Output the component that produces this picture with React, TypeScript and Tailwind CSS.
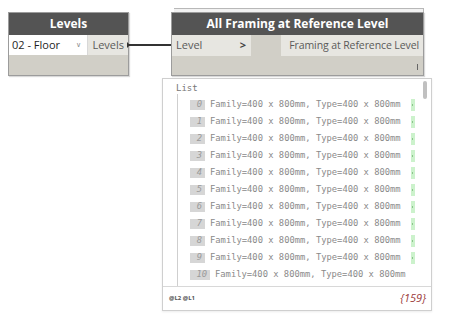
import React from 'react';

const rowText = 'Family=400 x 800mm, Type=400 x 800mm';

function Port({ children, align = 'left' }: { children: React.ReactNode; align?: 'left' | 'right' }) {
    return (
        <div className={`h-full bg-[#e7e6e1] flex items-center px-[4px] text-[11px] text-[#5a5a5a] whitespace-nowrap ${align === 'right' ? 'justify-end' : ''}`}>
            {children}
        </div>
    );
}

export default function App() {
    const rows = Array.from({ length: 12 }, (_, i) => i);

    return (
        <div className="relative w-[474px] h-[320px] bg-white overflow-hidden" style={{ fontFamily: '"Open Sans", "Noto Sans", sans-serif' }}>
            {/* Levels node */}
            <div className="absolute left-[8px] top-[12px] w-[121px] border border-[#9c9c9c] shadow-[1px_1px_1px_rgba(0,0,0,0.15)]">
                <div className="h-[22px] bg-[#545454] flex items-center justify-center text-white text-[12px] font-bold">Levels</div>
                <div className="h-[20px] flex">
                    <div className="w-[80px] bg-white flex items-center justify-between pl-[3px] pr-[6px] border-r border-[#d8d8d8]">
                        <span className="text-[11px] text-[#1e1e1e] font-medium">02 - Floor</span>
                        <span className="text-[7px] text-[#888]">&#8744;</span>
                    </div>
                    <div className="flex-1">
                        <Port>Levels</Port>
                    </div>
                </div>
                <div className="h-[20px] bg-[#d1cfc7]" />
            </div>

            {/* wire */}
            <svg className="absolute left-[126px] top-[39px]" width="48" height="12" viewBox="0 0 48 12">
                <line x1="3" y1="6" x2="45" y2="6" stroke="#333" strokeWidth="2" />
                <path d="M1 3 L4 6 L1 9 Z" fill="#333" />
                <path d="M47 3 L44 6 L47 9 Z" fill="#333" />
            </svg>

            {/* Main node, stacked look */}
            <div className="absolute left-[174px] top-[8px] w-[250px] h-[6px] border-t border-r border-[#b8b8b8] bg-[#f2f2f2]" />
            <div className="absolute left-[171px] top-[12px] w-[253px] border border-[#9c9c9c] shadow-[1px_1px_1px_rgba(0,0,0,0.15)]">
                <div className="h-[22px] bg-[#545454] flex items-center justify-center text-white text-[12px] font-bold">
                    All Framing at Reference Level
                </div>
                <div className="h-[21px] flex bg-[#d1cfc7]">
                    <div className="w-[79px]">
                        <Port>
                            <span className="flex-1">Level</span>
                            <span className="font-bold text-[#444] text-[11px] pr-[1px]">&gt;</span>
                        </Port>
                    </div>
                    <div className="flex-1" />
                    <div className="w-[142px]">
                        <Port align="right">
                            <span className="text-[10.5px] tracking-[-0.1px]">Framing at Reference Level</span>
                        </Port>
                    </div>
                </div>
                <div className="h-[19px] bg-[#d1cfc7] flex items-end justify-end pr-[5px] pb-[5px]">
                    <div className="w-px h-[6px] bg-[#666]" />
                </div>
            </div>

            {/* Preview bubble */}
            <div className="absolute left-[162px] top-[78px] w-[270px] h-[233px] border border-[#cfcfcf] bg-white flex flex-col shadow-[0_1px_2px_rgba(0,0,0,0.08)]">
                <div className="relative flex-1 overflow-hidden" style={{ fontFamily: '"DejaVu Sans Mono", "Liberation Mono", monospace' }}>
                    <div className="absolute right-[4px] top-[2px] w-[4px] h-[18px] rounded-full bg-[#c0c0c0]" />
                    <div className="pl-[13px] pt-[3px] text-[9px] text-[#777] leading-[12px]">List</div>
                    <div className="ml-[14px] border-l border-[#cfcfcf] pt-[2px] pl-[12px]">
                        {rows.map((i) => (
                            <div key={i} className="h-[17px] flex items-center text-[8.8px] text-[#8a8a8a]">
                                <span className={`h-[10px] bg-[#d6d6d6] italic text-[#9a9a9a] flex items-center justify-end pr-[3px] leading-none ${i >= 10 ? 'w-[20px]' : 'w-[15px]'}`}>
                                    {i}
                                </span>
                                <span className="ml-[5px] whitespace-nowrap">{rowText}</span>
                                {i < 10 && (
                                    <span className="ml-[10px] w-[4px] h-[12px] bg-[#ccf2cc] flex items-center justify-center">
                                        <span className="w-px h-[2px] bg-[#8bc48b]" />
                                    </span>
                                )}
                            </div>
                        ))}
                    </div>
                </div>
                <div className="h-[24px] border-t border-[#d8d8d8] flex items-center justify-between pl-[6px] pr-[5px]">
                    <span className="text-[6px] font-bold text-[#555]">@L2 @L1</span>
                    <span className="text-[11px] italic text-[#9b3a3a]">{'{159}'}</span>
                </div>
            </div>
        </div>
    );
}
